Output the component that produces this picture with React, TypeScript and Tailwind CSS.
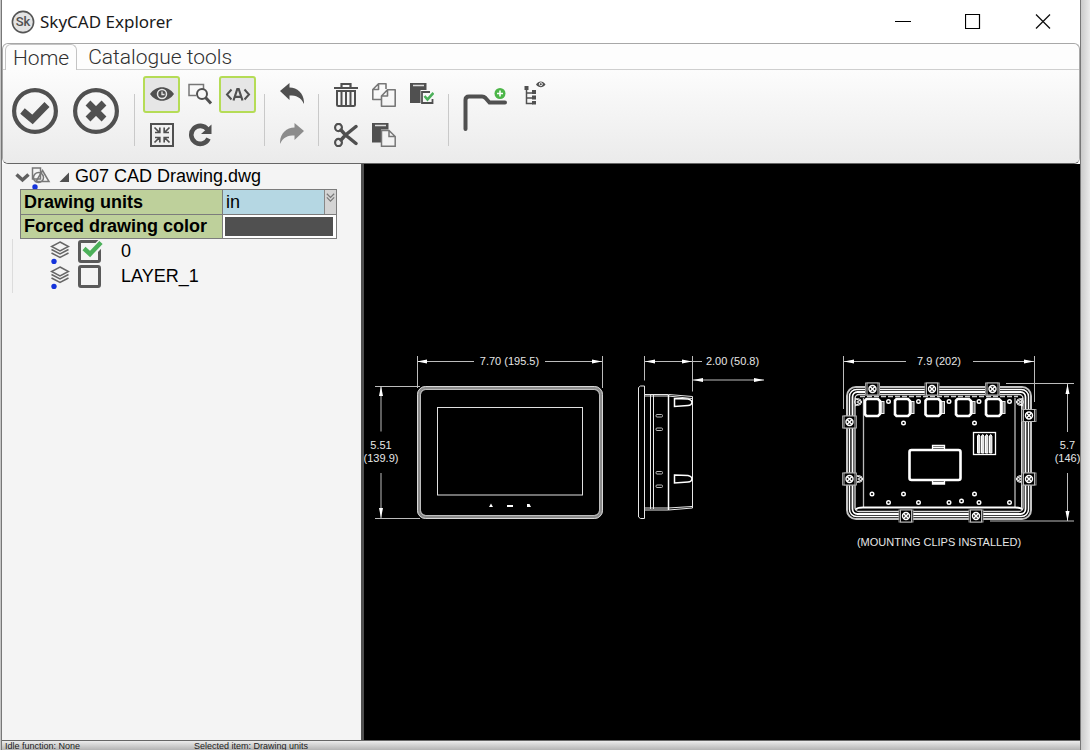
import { useState } from 'react'
import type { ReactNode } from 'react'

type IconProps = { children: ReactNode; className?: string; box?: string }

function Icon({ children, className = 'size-6', box = '0 0 24 24' }: IconProps) {
  return (
    <svg viewBox={box} className={className} fill="none" stroke="#505050" aria-hidden="true">
      {children}
    </svg>
  )
}

type ToolProps = {
  label: string
  children: ReactNode
  active?: boolean
  className?: string
}

function Tool({ label, children, active, className = 'size-[37px]' }: ToolProps) {
  return (
    <button
      type="button"
      aria-label={label}
      aria-pressed={active}
      className={`flex items-center justify-center rounded-[3px] border-2 ${
        active ? 'border-[#b5dc56] bg-[#e6e6e6]' : 'border-transparent'
      } ${className}`}
    >
      {children}
    </button>
  )
}

function Divider() {
  return <div className="mt-[18px] h-[52px] w-px bg-[#c9c9c9]" />
}

function TitleBar() {
  return (
    <header className="flex h-[43px] shrink-0 items-center bg-white pl-[9px]">
      <svg viewBox="0 0 24 24" className="size-6" aria-hidden="true">
        <circle cx="12" cy="12" r="10.600" fill="#e4e4e4" stroke="#555" strokeWidth="1.600" />
        <text
          x="12"
          y="16"
          textAnchor="middle"
          fontSize="13"
          fontWeight="500"
          fill="#505050"
          className="font-['Roboto',sans-serif]"
        >
          Sk
        </text>
      </svg>
      <h1 className="ml-[5px] flex-1 font-['Noto_Sans','Open_Sans',sans-serif] text-[17px] text-[#1a1a1a]">
        SkyCAD Explorer
      </h1>
      <div className="flex gap-6 pr-[14px]">
        <button type="button" aria-label="Minimize" className="flex h-8 w-[46px] items-center justify-center">
          <svg viewBox="0 0 16 16" className="size-4" stroke="#000">
            <path d="M0 7.500H16" />
          </svg>
        </button>
        <button type="button" aria-label="Maximize" className="flex h-8 w-[46px] items-center justify-center">
          <svg viewBox="0 0 16 16" className="size-4" stroke="#000" fill="none">
            <path d="M.5 .5H14.500V14.500H.5Z" strokeWidth="1.200" />
          </svg>
        </button>
        <button type="button" aria-label="Close" className="flex h-8 w-[46px] items-center justify-center">
          <svg viewBox="0 0 16 16" className="size-4" stroke="#111">
            <path d="M1 .5L15 14.500M15 .5L1 14.500" strokeWidth="1.300" />
          </svg>
        </button>
      </div>
    </header>
  )
}

function Toolbar() {
  return (
    <div
      role="toolbar"
      aria-label="Home"
      className="flex items-start gap-2 bg-linear-to-b from-[#fcfcfc] to-[#ebebeb] pt-[6px] pl-[2px] pb-[10px]"
    >
      <div className="flex gap-px pt-[5px]">
        <Tool label="Accept" className="size-[60px]">
          <Icon className="size-12" box="0 0 48 48">
            <circle cx="24" cy="24" r="20.900" strokeWidth="4.200" />
            <path d="M11.500 24L21.500 32.500L36 17.500" strokeWidth="7" />
          </Icon>
        </Tool>
        <Tool label="Cancel" className="size-[60px]">
          <Icon className="size-12" box="0 0 48 48">
            <circle cx="24" cy="24" r="20.900" strokeWidth="4.200" />
            <path d="M16 16L32 32M32 16L16 32" strokeWidth="6.800" />
          </Icon>
        </Tool>
      </div>
      <Divider />
      <div className="grid grid-cols-3 gap-x-px gap-y-[3px]">
        <Tool label="Show" active>
          <Icon>
            <path d="M0 11C6 2 18 2 24 11C18 20 6 20 0 11Z" fill="#505050" stroke="none" />
            <circle cx="12" cy="11" r="4.500" stroke="#e6e6e6" strokeWidth="1.500" />
            <path d="M12 8.500V11.500H14.500" stroke="#e6e6e6" strokeWidth="1.300" />
          </Icon>
        </Tool>
        <Tool label="Zoom window">
          <Icon>
            <path d="M8 12.500H1V1.500H15.500V6" strokeWidth="1.500" stroke="#777" />
            <circle cx="14" cy="11" r="5" strokeWidth="2" />
            <path d="M17.500 14.500L23 20.500" strokeWidth="3" />
          </Icon>
        </Tool>
        <Tool label="Show text" active>
          <Icon box="0 0 26 26" className="size-[26px]">
            <path d="M6.500 7.500L2 12.500L6.500 17.500M19.500 7.500L24 12.500L19.500 17.500" strokeWidth="2" />
            <path d="M8.500 18.500L12.300 7H13.700L17.500 18.500M10 14.800H16" strokeWidth="2.200" />
          </Icon>
        </Tool>
        <Tool label="Zoom extents">
          <Icon>
            <path d="M1 1H23V23H1Z" strokeWidth="2" />
            <path
              d="M4.500 4.500L9 9M19.500 4.500L15 9M4.500 19.500L9 15M19.500 19.500L15 15M5 9.500H9.800V4.500M19 9.500H14.200V4.500M5 14.500H9.800V19.500M19 14.500H14.200V19.500"
              strokeWidth="1.700"
            />
          </Icon>
        </Tool>
        <Tool label="Refresh">
          <Icon>
            <path d="M19.500 6.500A9 9 0 1 0 20.500 15.500" strokeWidth="4.600" />
            <path d="M23.500 1.500V11H13Z" fill="#505050" stroke="none" />
          </Icon>
        </Tool>
      </div>
      <Divider />
      <div className="grid gap-y-[3px]">
        <Tool label="Undo">
          <Icon>
            <path
              d="M0 8L9.500 0V4.500C18 4.500 24.500 11 24 21C21 14 16 12.500 9.500 12.500V17Z"
              fill="#505050"
              stroke="none"
            />
          </Icon>
        </Tool>
        <Tool label="Redo">
          <Icon>
            <path
              d="M24 8L14.500 0V4.500C6 4.500 -.5 11 0 21C3 14 8 12.500 14.500 12.500V17Z"
              fill="#8c8c8c"
              stroke="none"
            />
          </Icon>
        </Tool>
      </div>
      <Divider />
      <div className="grid grid-cols-3 gap-x-px gap-y-[3px]">
        <Tool label="Delete">
          <Icon>
            <path d="M7.500 4V1H16.500V4M0 5H24" strokeWidth="2.200" />
            <path d="M3 8H21V21.500Q21 23 19.500 23H4.500Q3 23 3 21.500Z" strokeWidth="2" />
            <path d="M7.500 8V22M12 8V22M16.500 8V22" strokeWidth="2" />
          </Icon>
        </Tool>
        <Tool label="Copy">
          <Icon>
            <g stroke="#777" strokeWidth="1.600" strokeLinejoin="round">
              <path d="M9 16.500H.8V6.500L6.500 .8H14V6M6.500 .8V6.500H.8" />
              <path d="M9.500 13L15.500 6.800H23.200V23.200H9.500ZM15.500 6.800V13H9.500" />
            </g>
          </Icon>
        </Tool>
        <Tool label="Paste selection">
          <Icon>
            <path d="M0 0H16.500V7H10.500V20H0Z" fill="#505050" stroke="none" />
            <path d="M3 2.500H14" stroke="#ddd" strokeWidth="1.300" />
            <path d="M20 9H12V20H22.500V16" strokeWidth="1.800" />
            <path d="M14.500 13L17.500 16.500L23.500 10" stroke="#4cb05a" strokeWidth="2.600" />
          </Icon>
        </Tool>
        <Tool label="Cut">
          <Icon>
            <ellipse cx="4.500" cy="4.500" rx="3.400" ry="3.700" strokeWidth="2.200" />
            <ellipse cx="4.500" cy="19.500" rx="3.400" ry="3.700" strokeWidth="2.200" />
            <path d="M7 7L11 11.500L22 20.500M7 17L11 12.500L22 3.500" strokeWidth="3.400" strokeLinecap="round" />
          </Icon>
        </Tool>
        <Tool label="Paste">
          <Icon>
            <path d="M0 0H16.500V6.500H9V19.500H0Z" fill="#505050" stroke="none" />
            <path d="M3 2.500H14" stroke="#ddd" strokeWidth="1.300" />
            <path
              d="M9.500 23.200V7.500H17L23.200 13.500V23.200ZM17 7.500V13.500H23"
              fill="#f3f3f3"
              stroke="#777"
              strokeWidth="1.500"
            />
          </Icon>
        </Tool>
      </div>
      <Divider />
      <div className="flex">
        <Tool label="Add wire" className="h-[70px] w-[60px]">
          <Icon className="h-12 w-[52px]" box="0 0 52 48">
            <path
              d="M4.500 42V13Q4.500 9.500 8 9.500H21Q23 9.500 24.500 11L28.500 15.500H44"
              strokeWidth="4"
              strokeLinecap="round"
            />
            <circle cx="39" cy="6.500" r="5.500" fill="#4cb648" stroke="none" />
            <path d="M39 3.500V9.500M36 6.500H42" stroke="#fff" strokeWidth="1.600" />
          </Icon>
        </Tool>
        <Tool label="Show tree">
          <Icon className="size-6 overflow-visible">
            <path d="M2.500 5V20.500H9M2.500 10H9M2.500 15H9" strokeWidth="1.500" />
            <g fill="#505050" stroke="none">
              <path d="M.5 3H4.500V7H.5ZM8 7H12V11H8ZM8 12.500H12V16.500H8ZM8 18H12V21.500H8Z" />
              <path d="M12 1.500C14.500 -2.500 19 -2.500 21.500 1.500C19 5 14.500 5 12 1.500Z" />
            </g>
            <circle cx="16.800" cy="1.200" r="1.500" stroke="#f5f5f5" />
          </Icon>
        </Tool>
      </div>
    </div>
  )
}

function Ribbon() {
  return (
    <div className="shrink-0 overflow-hidden rounded-md border border-[#a8a8a8] border-b-[#666] bg-[#fdfdfd]">
      <div
        role="tablist"
        className="flex h-[26px] border-b border-[#cfcfcf] pl-[2px] font-['Roboto',sans-serif] text-[21px] leading-[26px] font-light text-[#303030]"
      >
        <button
          type="button"
          role="tab"
          aria-selected="true"
          className="-mb-px h-[26px] rounded-t-md border border-b-0 border-[#c4c4c4] bg-[#fdfdfd] px-[7px]"
        >
          Home
        </button>
        <button type="button" role="tab" aria-selected="false" className="px-[11px]">
          Catalogue tools
        </button>
      </div>
      <Toolbar />
    </div>
  )
}

function LayerIcon() {
  return (
    <svg viewBox="0 0 20 24" className="h-6 w-5" fill="none" stroke="#666" strokeWidth="1.500" aria-hidden="true">
      <path d="M10 2L18.500 6.500L10 11L1.500 6.500Z" />
      <path d="M1.500 9.500L10 14L18.500 9.500M1.500 13L10 17.500L18.500 13" />
      <circle cx="4" cy="21.500" r="2.700" fill="#1534dc" stroke="none" />
    </svg>
  )
}

type LayerRowProps = { name: string; checked: boolean; onToggle: () => void }

function LayerRow({ name, checked, onToggle }: LayerRowProps) {
  return (
    <li>
      <label className="flex h-[25px] items-center pl-[37px]">
        <LayerIcon />
        <span className="relative ml-2 size-[23px]">
          <input
            type="checkbox"
            checked={checked}
            onChange={onToggle}
            className="block size-[23px] appearance-none rounded-[3px] border-3 border-[#5a5a5a]"
          />
          {checked && (
            <svg viewBox="0 0 26 23" className="pointer-events-none absolute top-0 left-0 h-[23px] w-[26px]" fill="none">
              <path d="M6 8.500L12 14.500L25 1" stroke="#f4f4f4" strokeWidth="8" />
              <path d="M6 8.500L12 14L23 2.500" stroke="#4cb05a" strokeWidth="4.500" />
            </svg>
          )}
        </span>
        <span className="ml-5">{name}</span>
      </label>
    </li>
  )
}

function TreePanel() {
  const [layers, setLayers] = useState([
    { name: '0', visible: true },
    { name: 'LAYER_1', visible: false },
  ])

  const toggle = (name: string) =>
    setLayers(layers.map((l) => (l.name === name ? { ...l, visible: !l.visible } : l)))

  return (
    <aside className="w-[362px] shrink-0 border-r-3 border-[#505050] bg-[#f4f4f4] font-['Liberation_Sans',sans-serif] text-[18px] text-black">
      <div className="flex h-[25px] items-center pl-[13px]">
        <button type="button" aria-label="Collapse" className="flex items-center">
          <svg viewBox="0 0 58 24" className="h-6 w-[58px]" fill="none" stroke="#606060">
            <path d="M1.500 9.500L7.500 15L13.500 9.500" strokeWidth="3.500" />
            <g stroke="#777" strokeWidth="1.500">
              <path d="M17.500 3H25.500V14H17.500Z" />
              <circle cx="23.500" cy="12.500" r="5" />
              <path d="M27.500 5.500L34 16.500H21Z" />
            </g>
            <circle cx="20" cy="22" r="2.700" fill="#1534dc" stroke="none" />
            <path d="M44.500 17L54 7.500V17Z" fill="#505050" stroke="none" />
          </svg>
        </button>
        <span className="pl-[2px]">G07 CAD Drawing.dwg</span>
      </div>
      <table className="ml-[18px] w-[317px] table-fixed border-collapse">
        <tbody>
          <tr className="h-[25px]">
            <th className="w-[202px] border border-[#7c7c7c] bg-[#bed09b] p-0 pl-[3px] text-left leading-6">
              <label htmlFor="units">Drawing units</label>
            </th>
            <td className="border border-[#7c7c7c] p-0">
              <div className="flex h-6">
                <select id="units" className="min-w-0 flex-1 appearance-none bg-[#b5d7e3] pl-[3px] leading-6">
                  <option>in</option>
                  <option>mm</option>
                </select>
                <svg viewBox="0 0 12 24" className="h-6 w-3 border-l border-[#888] bg-[#d4d4d4]" fill="none" stroke="#777">
                  <path d="M2 3L6 7L10 3M2 7L6 11L10 7" strokeWidth="1.300" />
                </svg>
              </div>
            </td>
          </tr>
          <tr className="h-6">
            <th className="border border-[#7c7c7c] bg-[#bed09b] p-0 pl-[3px] text-left leading-[23px]">
              <label htmlFor="color">Forced drawing color</label>
            </th>
            <td className="border border-[#7c7c7c] bg-white p-0">
              <input
                id="color"
                type="color"
                defaultValue="#505050"
                className="block h-[23px] w-full appearance-none py-[2px] pr-[3px] pl-[2px] [&::-webkit-color-swatch-wrapper]:p-0 [&::-webkit-color-swatch]:rounded-none [&::-webkit-color-swatch]:border-0"
              />
            </td>
          </tr>
        </tbody>
      </table>
      <ul className="ml-[10px] border-l border-[#dcdcdc] pb-1">
        {layers.map((l) => (
          <LayerRow key={l.name} name={l.name} checked={l.visible} onToggle={() => toggle(l.name)} />
        ))}
      </ul>
    </aside>
  )
}

const clips = [
  [872.5, 389],
  [932, 389],
  [992.5, 389],
  [849.5, 422],
  [1029, 415.5],
  [849.5, 479],
  [1029, 479],
  [906, 516],
  [976, 516],
]

const ports = [864, 894, 924.5, 955, 985]

const holes = [
  [888.5, 401.5],
  [918.5, 401.5],
  [949, 401.5],
  [979, 401.5],
  [1009.5, 401.5],
  [903.5, 423],
  [974.5, 423],
  [872, 494],
  [903.5, 494],
  [974.5, 494],
  [888.5, 502.5],
  [918.5, 502.5],
  [949, 502.5],
  [961.5, 501],
  [979, 502.5],
  [1009.5, 502.5],
]

// Arrow heads, tip first, pointing l / r / u / d
function arrow(x: number, y: number, dir: string) {
  if (dir === 'l') return `M${x} ${y}l10 -2v4z`
  if (dir === 'r') return `M${x} ${y}l-10 -2v4z`
  if (dir === 'u') return `M${x} ${y}l-2 10h4z`
  return `M${x} ${y}l-2 -10h4z`
}

function FrontView() {
  return (
    <g>
      <rect x="419" y="388" width="182" height="129" rx="7" stroke="#8a8a8a" strokeWidth="4" />
      <rect x="417.500" y="386.500" width="185" height="132" rx="8" stroke="#d8d8d8" />
      <rect x="420.500" y="389.500" width="179" height="126" rx="5" stroke="#bdbdbd" />
      <rect x="437.500" y="407.500" width="145" height="87.500" stroke="#e0e0e0" />
      <path d="M489 507L491 503.500L493 507ZM507 505H513V507H507ZM527 504H529.500L531 507H527Z" fill="#fff" stroke="none" />
    </g>
  )
}

function SideView() {
  return (
    <g stroke="#e6e6e6">
      <path d="M644.500 386H640.500L638.500 387.500V517L640.500 518.500H644.500Z" />
      <path d="M644.500 394.500H668.500L692.500 396.500V508L668.500 510H644.500M644.500 396H668L692 398.500M644.500 508H668L692 506.500" />
      <path d="M650.500 395V509M653.500 395V509" />
      <path d="M668.500 395V510" strokeWidth="1.500" stroke="#fff" />
      <g stroke="#fff" strokeWidth="1.500">
        <path d="M674.500 398.500L688 399Q692 400 692 402.500Q691.500 405.500 688 405.500L674.500 406.500Z" />
        <path d="M674.500 475L688 475.500Q692 476.500 692 479Q691.500 482 688 482L674.500 483Z" />
      </g>
      {[415.5, 429, 472.5, 486].map((y) => (
        <rect key={y} x="656" y={y - 1} width="6.500" height="2.500" rx="1" stroke="#bbb" />
      ))}
    </g>
  )
}

function RearView() {
  return (
    <g stroke="#fff">
      <rect x="847" y="387" width="184" height="132" rx="9" stroke="#c4c4c4" strokeWidth="2" />
      <rect x="849.500" y="389.500" width="179" height="127" rx="7" strokeWidth="1.500" />
      <rect x="852.500" y="392" width="173" height="122" rx="5" strokeWidth="1.800" />
      <rect x="855" y="394.500" width="168" height="117" rx="4" stroke="#ddd" strokeWidth="1.300" />
      <path d="M860 396.500H1018" strokeDasharray="5 2" stroke="#ccc" strokeWidth="1.500" />
      <path d="M863.500 398V508M1015 398V508" stroke="#bbb" strokeWidth="1.300" />
      <path d="M856 509.500Q857 507.500 863 507.500H1015Q1021 507.500 1022 509.500" strokeWidth="2" />
      <path d="M1021.500 400V508" stroke="#ddd" />
      {[
        [858, 402],
        [1020, 402],
        [859, 479],
        [1020, 479],
      ].map(([x, y]) => (
        <g key={`${x}-${y}`}>
          <circle cx={x} cy={y} r="3.300" />
          <circle cx={x} cy={y} r="1" />
          <path
            d={x < 940 ? `M${x - 3} ${y - 4}L${x + 4} ${y}L${x - 3} ${y + 4}` : `M${x + 3} ${y - 4}L${x - 4} ${y}L${x + 3} ${y + 4}`}
          />
        </g>
      ))}
      {ports.map((x) => (
        <g key={x}>
          <rect x={x + 15} y="401.500" width="5" height="12" fill="#777" stroke="#eee" />
          <path d={`M${x + 17.5} 402V413`} stroke="#ccc" />
          <path
            d={`M${x + 2.5} 399H${x + 14}L${x + 16} 401V414L${x + 14} 416H${x + 2.5}L${x + 1} 414.5V400.5Z`}
            fill="#000"
            strokeWidth="2.600"
          />
        </g>
      ))}
      {holes.map(([x, y]) => (
        <circle key={`${x}-${y}`} cx={x} cy={y} r="1.800" strokeWidth="1.400" />
      ))}
      <rect x="973.500" y="432.500" width="22" height="22" strokeWidth="1.300" />
      {[977.5, 981.5, 985.5, 989.5].map((x) => (
        <path key={x} d={`M${x} 453V436Q${x + 1.2} 433 ${x + 2.4} 436V453Z`} fill="#ddd" />
      ))}
      <rect x="909.500" y="450" width="51" height="30" rx="2" strokeWidth="2.600" />
      <path
        d="M932.500 449V445.500H944.500V449M932.500 447.500H944.500M932.500 481V484H944.500V481M932.500 482.500H944.500"
        strokeWidth="1.300"
      />
      {clips.map(([x, y]) => (
        <g key={`${x}-${y}`}>
          <rect x={x - 7} y={y - 6} width="14" height="12" fill="#000" stroke="#999" />
          <rect x={x - 5.5} y={y - 6} width="11" height="12" fill="#000" stroke="#bbb" />
          <circle cx={x} cy={y} r="3.500" strokeWidth="1.400" />
          <path d={`M${x - 2.5} ${y - 2.5}L${x + 2.5} ${y + 2.5}M${x + 2.5} ${y - 2.5}L${x - 2.5} ${y + 2.5}`} strokeWidth="1.500" />
        </g>
      ))}
    </g>
  )
}

function Dimensions() {
  const heads = [
    arrow(417, 361.5, 'l'),
    arrow(602, 361.5, 'r'),
    arrow(381, 386, 'u'),
    arrow(381, 518, 'd'),
    arrow(645, 361.5, 'l'),
    arrow(692, 361.5, 'r'),
    arrow(693, 380, 'l'),
    arrow(764, 380, 'r'),
    arrow(844, 361.5, 'l'),
    arrow(1034, 361.5, 'r'),
    arrow(1067.5, 384, 'u'),
    arrow(1067.5, 521, 'd'),
  ]

  return (
    <g>
      <g stroke="#bcbcbc">
        <path d="M417.500 356V388M602.500 356V388M418 361.500H474M545 361.500H602" />
        <path d="M375 386.500H420M375 518.500H420M381 387V431.500M381 473V518" />
        <path d="M644.500 356V380.500M692.500 356V391.500M645 361.500H702M693 380H764" />
        <path d="M843.500 356V409M1034.500 356V402M844 361.500H906M973 361.500H1034" />
        <path d="M1006 383.500H1074M990 521H1074M1067.500 384V432M1067.500 473V521" />
      </g>
      <path d={heads.join('')} fill="#fff" stroke="none" />
      <g
        fill="#e6e6e6"
        stroke="none"
        fontSize="11"
        textAnchor="middle"
        className="font-['Liberation_Sans',sans-serif]"
      >
        <text x="509.500" y="365">7.70 (195.5)</text>
        <text x="381" y="449">5.51</text>
        <text x="381" y="462">(139.9)</text>
        <text x="732.500" y="365">2.00 (50.8)</text>
        <text x="939" y="365">7.9 (202)</text>
        <text x="1067.500" y="449">5.7</text>
        <text x="1067.500" y="462">(146)</text>
        <text x="939" y="546">(MOUNTING CLIPS INSTALLED)</text>
      </g>
    </g>
  )
}

function DrawingCanvas() {
  return (
    <main className="min-w-0 flex-1 bg-black">
      <svg viewBox="364 164 716 576" className="size-full" fill="none" role="img" aria-label="G07 CAD Drawing">
        <FrontView />
        <SideView />
        <RearView />
        <Dimensions />
      </svg>
    </main>
  )
}

function StatusBar() {
  return (
    <footer className="flex h-[10px] shrink-0 border-t border-[#666] bg-linear-to-b from-[#ececec] to-[#b4b4b4] pl-[3px] font-['Liberation_Sans',sans-serif] text-[9px] leading-[11px] text-[#222]">
      <p className="w-[189px]">Idle function: None</p>
      <p>Selected item: Drawing units</p>
    </footer>
  )
}

export default function App() {
  return (
    <div className="flex h-screen overflow-hidden bg-linear-to-l from-[#ebebeb] from-0% to-[#c4c4c4] to-1% pl-px pr-[9px]">
      <div className="flex min-w-0 flex-1 flex-col border-x border-[#777] bg-white">
        <TitleBar />
        <Ribbon />
        <div className="flex min-h-0 flex-1">
          <TreePanel />
          <DrawingCanvas />
        </div>
        <StatusBar />
      </div>
    </div>
  )
}
